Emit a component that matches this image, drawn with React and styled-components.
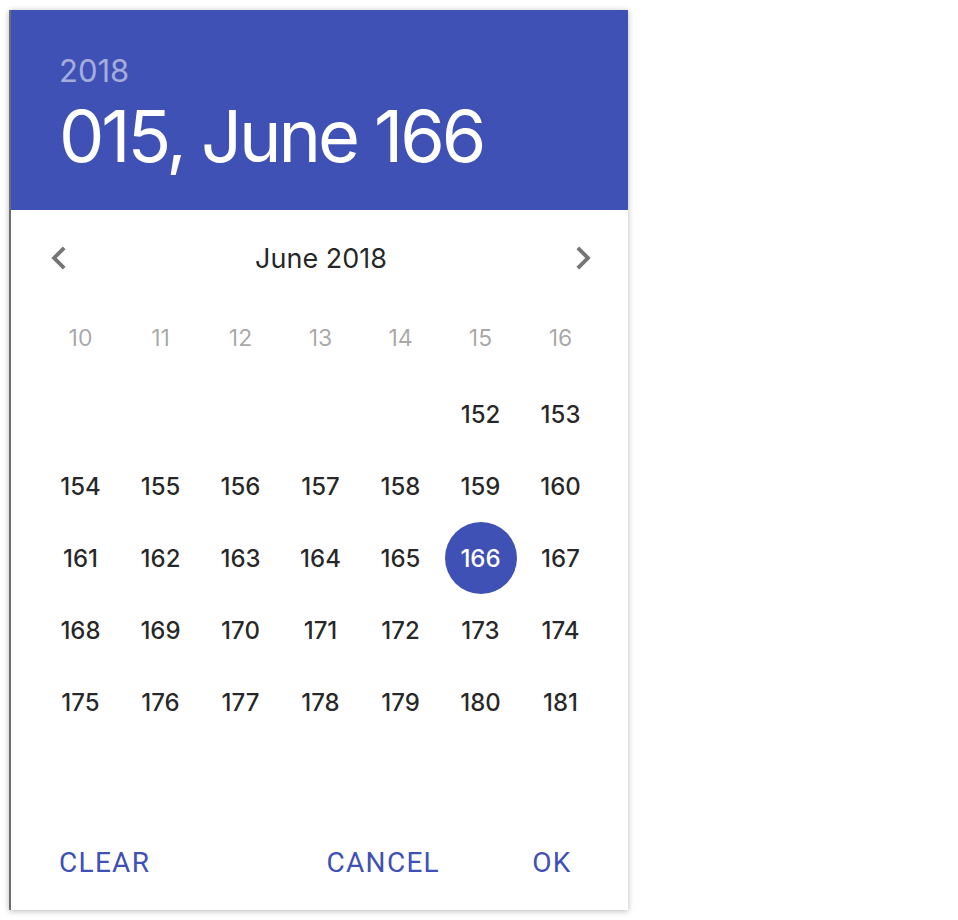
import React from 'react';
import styled, { createGlobalStyle } from 'styled-components';

const GlobalStyle = createGlobalStyle`
    html, body {
        margin: 0;
        padding: 0;
        background: #ffffff;
    }
`

const Page = styled.div`
    padding: 10px 0 0 9px;
    height: 920px;
    box-sizing: border-box;
`

const Dialog = styled.div`
    width: 619px;
    height: 900px;
    box-sizing: border-box;
    border-left: 2px solid #6e6e6e;
    background: #ffffff;
    box-shadow: 0 1px 6px rgba(0, 0, 0, 0.28);
    display: flex;
    flex-direction: column;
    font-family: Inter, "Noto Sans", sans-serif;
`

const Header = styled.div`
    height: 200px;
    box-sizing: border-box;
    background: #3f51b5;
    padding: 46px 0 0 48px;
    display: flex;
    flex-direction: column;
`

const Year = styled.div`
    font-size: 31px;
    line-height: 30px;
    color: rgba(255, 255, 255, 0.54);
`

const DateTitle = styled.div`
    margin-top: 14px;
    font-size: 72px;
    line-height: 72px;
    color: #ffffff;
    letter-spacing: -3.1px;
`

const Nav = styled.div`
    margin-top: 24px;
    height: 48px;
    padding: 0 22px 0 25px;
    display: flex;
    align-items: center;
    justify-content: space-between;
`

const NavButton = styled.button`
    width: 46px;
    height: 46px;
    padding: 0;
    border: none;
    background: transparent;
    color: #757575;
    display: flex;
    align-items: center;
    justify-content: center;
    cursor: pointer;
`

const MonthLabel = styled.div`
    font-size: 27px;
    color: rgba(0, 0, 0, 0.87);
`

const Grid = styled.div`
    display: grid;
    grid-template-columns: repeat(7, 80px);
    justify-content: center;
    padding-left: 2px;
`

const WeekLabels = styled(Grid)`
    margin-top: 36px;
    height: 40px;
    align-items: center;
`

const WeekLabel = styled.div`
    text-align: center;
    font-size: 23px;
    color: rgba(0, 0, 0, 0.36);
`

const Weeks = styled(Grid)`
    margin-top: 20px;
    grid-auto-rows: 72px;
`

const Day = styled.div`
    width: 72px;
    height: 72px;
    margin: 0 4px;
    border-radius: 50%;
    display: flex;
    align-items: center;
    justify-content: center;
    font-size: 24px;
    font-weight: 500;
    color: ${({selected}) => selected ? '#ffffff' : 'rgba(0, 0, 0, 0.85)'};
    background: ${({selected}) => selected ? '#3f51b5' : 'transparent'};
`

const Actions = styled.div`
    margin-top: auto;
    padding: 0 4px 12px 8px;
    display: flex;
    align-items: center;
`

const ActionButton = styled.button`
    height: 72px;
    min-width: 128px;
    margin: 0 8px;
    padding: 0 32px;
    border: none;
    background: transparent;
    color: #3f51b5;
    font-family: Roboto, "Liberation Sans", sans-serif;
    font-size: 28px;
    font-weight: 400;
    letter-spacing: 1.3px;
    text-transform: uppercase;
    cursor: pointer;
    ${({push}) => push ? 'margin-right: auto;' : ''}
`

const Chevron = ({dir}) => (
    <svg width="46" height="46" viewBox="0 0 24 24" fill="currentColor">
        {dir === 'left'
            ? <path d="M15.41 7.41L14 6l-6 6 6 6 1.41-1.41L10.83 12z" />
            : <path d="M10 6L8.59 7.41 13.17 12l-4.58 4.59L10 18l6-6z" />}
    </svg>
)

const labels = [10, 11, 12, 13, 14, 15, 16]

// first week starts on the 6th column
const days = [null, null, null, null, null, 152, 153]
for (let d = 154; d <= 181; d++) days.push(d)

const App = () => {
    const selected = 166
    return (
        <Page>
            <GlobalStyle />
            <Dialog>
                <Header>
                    <Year>2018</Year>
                    <DateTitle>015, June 166</DateTitle>
                </Header>
                <Nav>
                    <NavButton><Chevron dir="left" /></NavButton>
                    <MonthLabel>June 2018</MonthLabel>
                    <NavButton><Chevron dir="right" /></NavButton>
                </Nav>
                <WeekLabels>
                    {labels.map(l => <WeekLabel key={l}>{l}</WeekLabel>)}
                </WeekLabels>
                <Weeks>
                    {days.map((d, i) => d
                        ? <Day key={i} selected={d === selected}>{d}</Day>
                        : <div key={i} />)}
                </Weeks>
                <Actions>
                    <ActionButton push>Clear</ActionButton>
                    <ActionButton>Cancel</ActionButton>
                    <ActionButton>OK</ActionButton>
                </Actions>
            </Dialog>
        </Page>
    )
}

export default App;
